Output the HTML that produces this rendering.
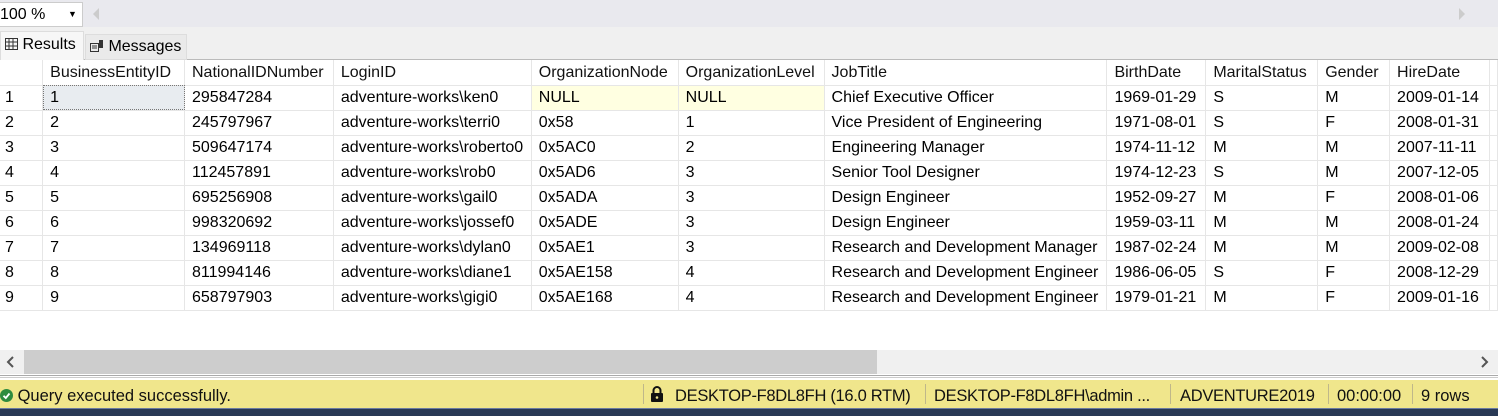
<!DOCTYPE html>
<html><head><meta charset="utf-8"><style>
*{margin:0;padding:0;box-sizing:border-box}
body{width:1498px;height:416px;overflow:hidden;background:#fff;font-family:"Liberation Sans",sans-serif;font-size:16px;color:#000;position:relative}
.abs{position:absolute}
table{position:absolute;left:0;top:60px;border-collapse:collapse;table-layout:fixed}
td{height:25px;border-right:1px solid #e6e6e6;border-bottom:1px solid #e6e6e6;padding:0 0 0 7px;white-space:nowrap;overflow:hidden;line-height:24px}
tr.h td{color:#111;height:25px;line-height:24px}
tr.h td span{position:relative;top:1px}
td.rn{padding-left:5px;border-right:1px solid #e6e6e6}
.y{background:#ffffe1}
.sel{background:#e8ecf0;outline:1px dotted #777;outline-offset:-1px}
.st{position:absolute;top:380px;height:28px;background:#f0e68c;width:1498px;font-size:16.5px;line-height:32px;color:#111}
.st span{position:absolute;top:0}
.sep{position:absolute;top:4px;width:1px;height:20px;background:#bfb78a}
</style></head><body>
<div class="abs" style="left:0;top:0;width:1498px;height:27px;background:#e9e9ee"></div>
<div class="abs" style="left:0;top:2px;width:83px;height:25px;background:#fff;border:1px solid #ccc;border-left:none;font-size:16px;line-height:23px">100 %<span style="position:absolute;left:68px;top:0;font-size:9px">▼</span></div>
<div class="abs" style="left:93px;top:8px;width:0;height:0;border-top:6px solid transparent;border-bottom:6px solid transparent;border-right:6px solid #ccc"></div>
<div class="abs" style="left:1459px;top:8px;width:0;height:0;border-top:6px solid transparent;border-bottom:6px solid transparent;border-left:6px solid #ccc"></div>
<div class="abs" style="left:0;top:27px;width:1498px;height:33px;background:#f0f0f0;border-bottom:1px solid #bbb"></div>
<div class="abs" style="left:0;top:31px;width:84px;height:29px;background:#f7f7f7;border:1px solid #ddd;border-bottom:none;font-size:16px;line-height:26px;padding-left:4px"><svg width="13" height="12" style="vertical-align:-1px"><rect x="0.5" y="0.5" width="12" height="11" fill="none" stroke="#333"/><path d="M0 4H13M0 8H13M4 0V12M8 0V12" stroke="#333"/></svg> Results</div>
<div class="abs" style="left:85px;top:34px;width:102px;height:26px;background:#eaeaea;border:1px solid #ddd;font-size:16px;line-height:24px;padding-left:4px"><svg width="14" height="12" style="vertical-align:-1px"><rect x="0.5" y="3.5" width="8" height="8" fill="none" stroke="#333"/><path d="M2 6H7M2 8H7" stroke="#333"/><rect x="9" y="0" width="4" height="8" fill="#333"/></svg> Messages</div>
<table>
<colgroup><col style="width:43px"><col style="width:142px"><col style="width:149px"><col style="width:198px"><col style="width:147px"><col style="width:146px"><col style="width:283px"><col style="width:99px"><col style="width:112px"><col style="width:72px"><col style="width:100px"><col style="width:7px"></colgroup>
<tr class="h"><td class="rn"></td><td><span>BusinessEntityID</span></td><td><span>NationalIDNumber</span></td><td><span>LoginID</span></td><td><span>OrganizationNode</span></td><td><span>OrganizationLevel</span></td><td><span>JobTitle</span></td><td><span>BirthDate</span></td><td><span>MaritalStatus</span></td><td><span>Gender</span></td><td><span>HireDate</span></td><td></td></tr>
<tr><td class="rn">1</td><td class="sel">1</td><td>295847284</td><td>adventure-works\ken0</td><td class="y">NULL</td><td class="y">NULL</td><td>Chief Executive Officer</td><td>1969-01-29</td><td>S</td><td>M</td><td>2009-01-14</td><td></td></tr>
<tr><td class="rn">2</td><td>2</td><td>245797967</td><td>adventure-works\terri0</td><td>0x58</td><td>1</td><td>Vice President of Engineering</td><td>1971-08-01</td><td>S</td><td>F</td><td>2008-01-31</td><td></td></tr>
<tr><td class="rn">3</td><td>3</td><td>509647174</td><td>adventure-works\roberto0</td><td>0x5AC0</td><td>2</td><td>Engineering Manager</td><td>1974-11-12</td><td>M</td><td>M</td><td>2007-11-11</td><td></td></tr>
<tr><td class="rn">4</td><td>4</td><td>112457891</td><td>adventure-works\rob0</td><td>0x5AD6</td><td>3</td><td>Senior Tool Designer</td><td>1974-12-23</td><td>S</td><td>M</td><td>2007-12-05</td><td></td></tr>
<tr><td class="rn">5</td><td>5</td><td>695256908</td><td>adventure-works\gail0</td><td>0x5ADA</td><td>3</td><td>Design Engineer</td><td>1952-09-27</td><td>M</td><td>F</td><td>2008-01-06</td><td></td></tr>
<tr><td class="rn">6</td><td>6</td><td>998320692</td><td>adventure-works\jossef0</td><td>0x5ADE</td><td>3</td><td>Design Engineer</td><td>1959-03-11</td><td>M</td><td>M</td><td>2008-01-24</td><td></td></tr>
<tr><td class="rn">7</td><td>7</td><td>134969118</td><td>adventure-works\dylan0</td><td>0x5AE1</td><td>3</td><td>Research and Development Manager</td><td>1987-02-24</td><td>M</td><td>M</td><td>2009-02-08</td><td></td></tr>
<tr><td class="rn">8</td><td>8</td><td>811994146</td><td>adventure-works\diane1</td><td>0x5AE158</td><td>4</td><td>Research and Development Engineer</td><td>1986-06-05</td><td>S</td><td>F</td><td>2008-12-29</td><td></td></tr>
<tr><td class="rn">9</td><td>9</td><td>658797903</td><td>adventure-works\gigi0</td><td>0x5AE168</td><td>4</td><td>Research and Development Engineer</td><td>1979-01-21</td><td>M</td><td>F</td><td>2009-01-16</td><td></td></tr>
</table>
<div class="abs" style="left:0;top:350px;width:1498px;height:24px;background:#f0f0f0"></div>
<div class="abs" style="left:24px;top:350px;width:853px;height:24px;background:#cdcdcd"></div>
<svg class="abs" style="left:5px;top:355px" width="10" height="14"><path d="M8 2L3 7L8 12" stroke="#555" stroke-width="2" fill="none"/></svg>
<svg class="abs" style="left:1480px;top:355px" width="10" height="14"><path d="M2 2L7 7L2 12" stroke="#555" stroke-width="2" fill="none"/></svg>
<div class="abs" style="left:0;top:375px;width:1498px;height:1px;background:#aaa"></div>
<div class="abs" style="left:0;top:377px;width:1498px;height:1px;background:#ccc"></div>
<div class="st">
<span style="left:0"><svg width="13" height="13" style="vertical-align:-1px"><circle cx="6.5" cy="6.5" r="6.5" fill="#2e8b3e"/><path d="M3.5 6.8L5.8 9L9.5 4.5" stroke="#fff" stroke-width="1.8" fill="none"/></svg> Query executed successfully.</span>
<div class="sep" style="left:643px"></div>
<span style="left:650px"><svg width="14" height="17" style="vertical-align:-2px"><path d="M3.5 7V4.5a3.5 3.5 0 0 1 7 0V7" stroke="#111" stroke-width="2" fill="none"/><rect x="1" y="7" width="12" height="9" rx="1" fill="#111"/><circle cx="7" cy="11.5" r="1.3" fill="#f0e68c"/></svg></span>
<span style="left:675px;letter-spacing:-0.3px">DESKTOP-F8DL8FH (16.0 RTM)</span>
<div class="sep" style="left:925px"></div>
<span style="left:934px;letter-spacing:-0.3px">DESKTOP-F8DL8FH\admin ...</span>
<div class="sep" style="left:1170px"></div>
<span style="left:1180px;letter-spacing:-0.3px">ADVENTURE2019</span>
<div class="sep" style="left:1328px"></div>
<span style="left:1337px">00:00:00</span>
<div class="sep" style="left:1412px"></div>
<span style="left:1421px">9 rows</span>
</div>
<div class="abs" style="left:0;top:408px;width:1498px;height:8px;background:#293955;border-top:1px solid #6b7ba0"></div>
</body></html>
